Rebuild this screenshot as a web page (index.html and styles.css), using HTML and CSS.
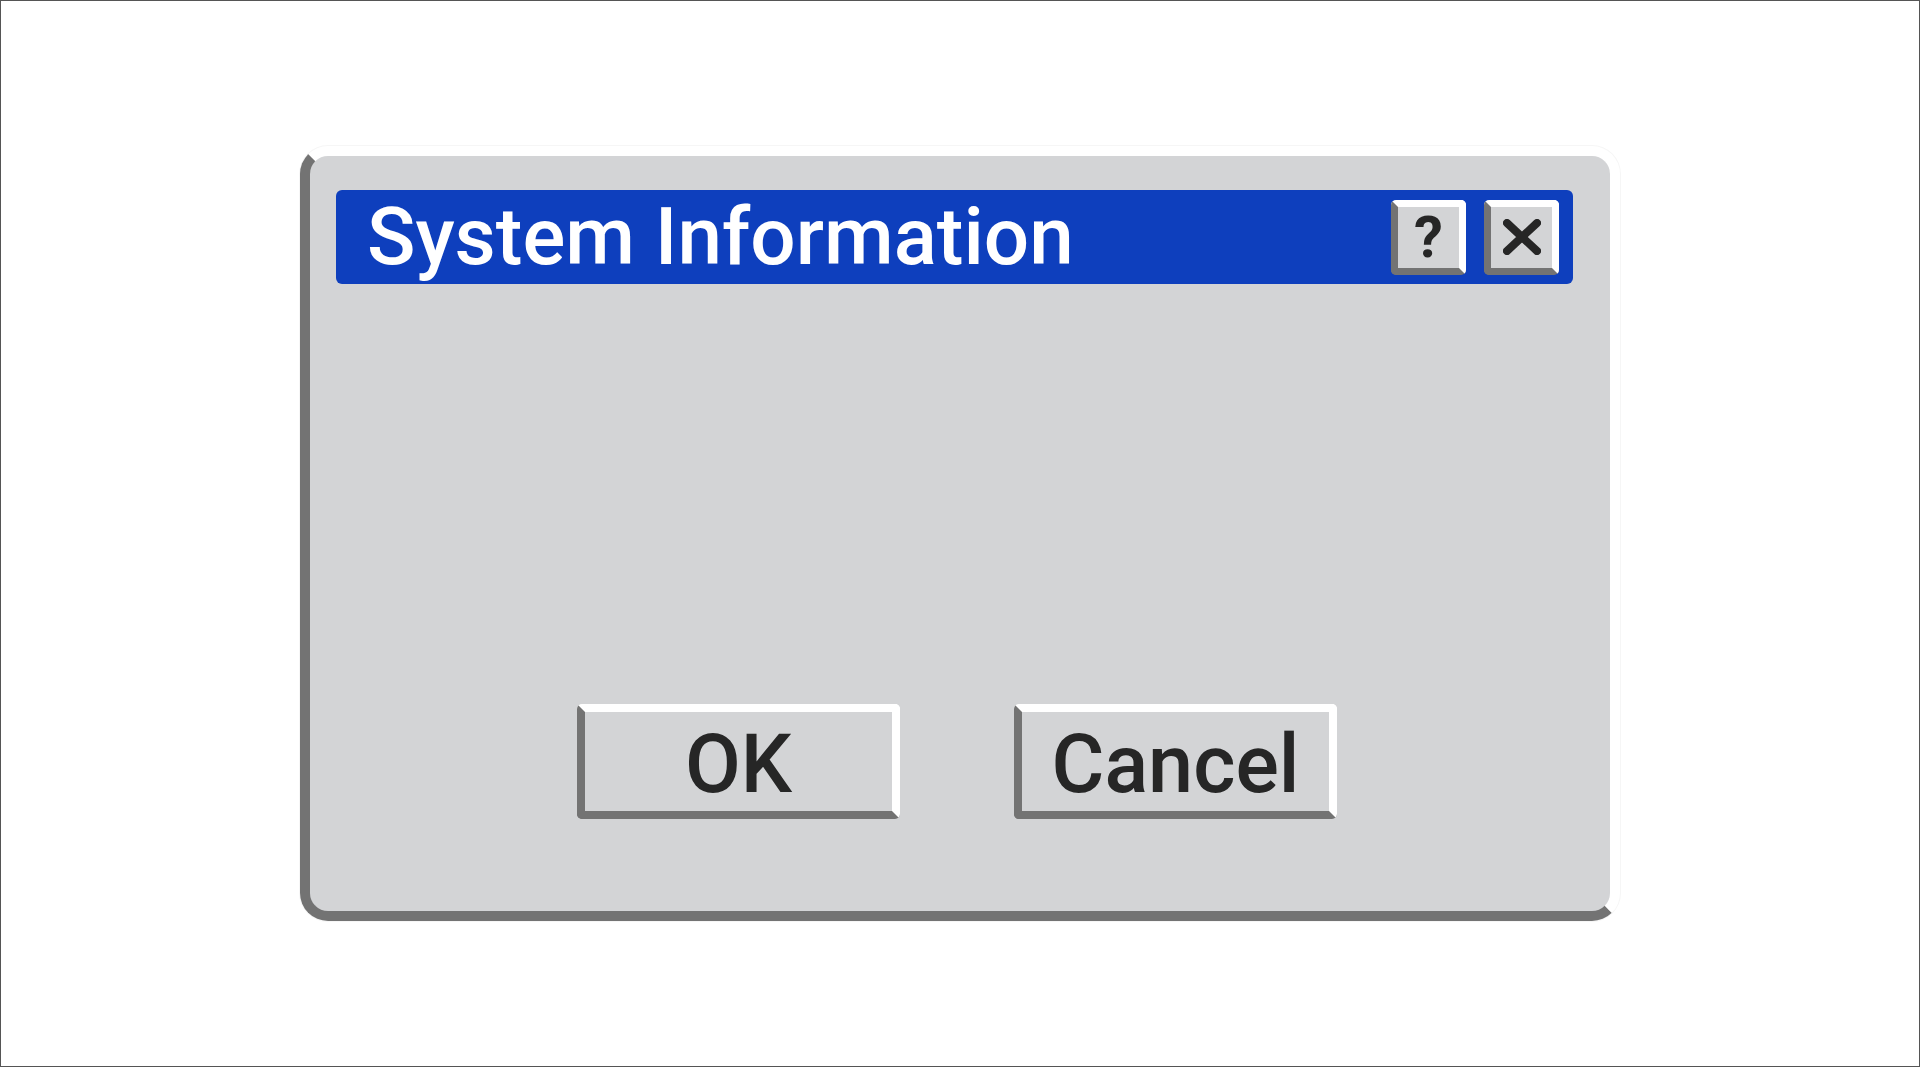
FILE: index.html
```html
<!DOCTYPE html>
<html lang="en">
<head>
<meta charset="utf-8">
<title>System Information</title>
<link rel="stylesheet" href="styles.css">
</head>
<body>
<div class="page">
  <div class="dialog">
    <div class="titlebar">
      <span class="title">System Information</span>
      <div class="tb-buttons">
        <div class="tb-btn"><span class="q">?</span></div>
        <div class="tb-btn">
          <svg class="x-icon" width="38" height="36" viewBox="0 0 38 36">
            <path d="M4 4 L34 32 M34 4 L4 32" stroke="#262626" stroke-width="8" stroke-linecap="round" fill="none"/>
          </svg>
        </div>
      </div>
    </div>
    <div class="actions">
      <div class="btn">OK</div>
      <div class="btn">Cancel</div>
    </div>
  </div>
</div>
</body>
</html>
```
FILE: styles.css
```css
html, body {
  margin: 0;
  padding: 0;
  background: #ffffff;
}
.page {
  box-sizing: border-box;
  width: 1920px;
  height: 1067px;
  border: 1px solid #555555;
  display: flex;
  align-items: center;
  justify-content: center;
  font-family: Roboto, "Liberation Sans", sans-serif;
}
.dialog {
  box-sizing: border-box;
  width: 1320px;
  height: 775px;
  border: 10px solid;
  border-color: #ffffff #ffffff #737373 #737373;
  border-radius: 28px;
  background: #d3d4d6;
  box-shadow: 0 0 0 1px #f6f6f6;
  padding: 34px 37px 0 26px;
  display: flex;
  flex-direction: column;
}
.titlebar {
  height: 94px;
  background: #0e3fbd;
  border-radius: 6px;
  display: flex;
  align-items: center;
  padding: 0 14px 0 31px;
}
.title {
  flex: 1;
  color: #ffffff;
  font-size: 80px;
  font-weight: 500;
  line-height: 1;
  white-space: nowrap;
}
.tb-buttons {
  display: flex;
  gap: 18px;
}
.tb-btn {
  box-sizing: border-box;
  width: 75px;
  height: 75px;
  border: 7px solid;
  border-color: #ffffff #ffffff #737373 #737373;
  border-radius: 5px;
  background: #d3d4d6;
  display: flex;
  align-items: center;
  justify-content: center;
}
.q {
  font-size: 58px;
  font-weight: 700;
  line-height: 1;
  color: #262626;
}
.actions {
  margin-top: 420px;
  display: flex;
  justify-content: center;
  gap: 114px;
  padding-left: 5px;
}
.btn {
  box-sizing: border-box;
  width: 323px;
  height: 115px;
  border: 8px solid;
  border-color: #ffffff #ffffff #737373 #737373;
  border-radius: 5px;
  background: #d3d4d6;
  display: flex;
  align-items: center;
  justify-content: center;
  padding-top: 5px;
  font-size: 81px;
  font-weight: 500;
  color: #262626;
  line-height: 1;
}
```
